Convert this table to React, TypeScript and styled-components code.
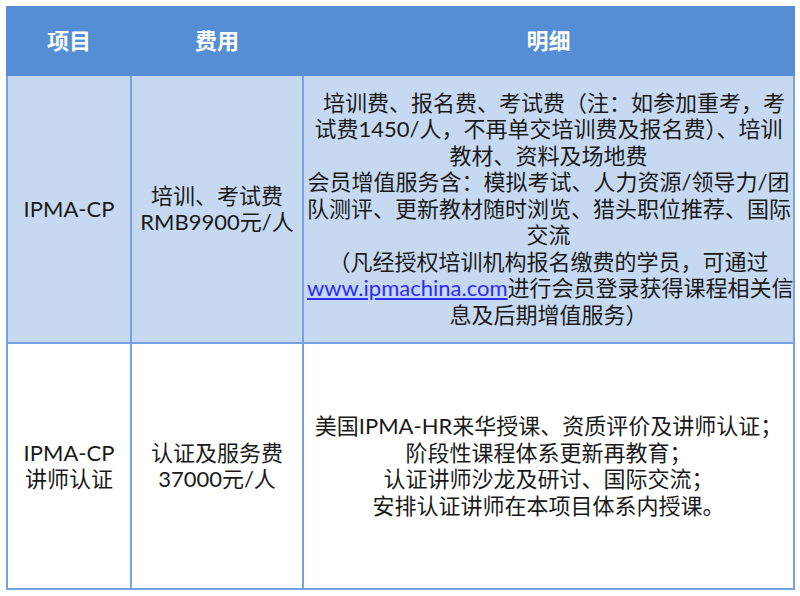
import styled, { createGlobalStyle } from "styled-components";

const GlobalStyle = createGlobalStyle`
  html, body {
    margin: 0;
    padding: 0;
    background: #ffffff;
  }
  body {
    font-family: Lato, "Noto Sans CJK SC", sans-serif;
    color: #1a1a1a;
  }
`;

const Page = styled.div`
  padding: 6px;
`;

const Table = styled.table`
  border-collapse: collapse;
  table-layout: fixed;
  width: 787px;
  font-size: 22px;
  line-height: 26.5px;
`;

const HeadRow = styled.tr`
  height: 68px;
  background: #558ed5;
`;

const HeadCell = styled.th`
  border: 2px solid #558ed5;
  color: #ffffff;
  font-weight: 700;
  text-align: center;
  vertical-align: middle;
  padding: 0;
`;

const BodyRow = styled.tr<{ $shade?: boolean; $h: number }>`
  height: ${({ $h }) => $h}px;
  background: ${({ $shade }) => ($shade ? "#c6d9f1" : "#ffffff")};
`;

const Cell = styled.td`
  border: 2px solid #75a2e2;
  text-align: center;
  vertical-align: middle;
  padding: 0 3px;
  white-space: nowrap;
  overflow: hidden;
`;

const Link = styled.a`
  color: #2b2bff;
  text-decoration: underline;
`;

export default function App() {
  return (
    <>
      <GlobalStyle />
      <Page>
        <Table>
          <colgroup>
            <col style={{ width: 124 }} />
            <col style={{ width: 172 }} />
            <col style={{ width: 491 }} />
          </colgroup>
          <thead>
            <HeadRow>
              <HeadCell>项目</HeadCell>
              <HeadCell>费用</HeadCell>
              <HeadCell>明细</HeadCell>
            </HeadRow>
          </thead>
          <tbody>
            <BodyRow $shade $h={268}>
              <Cell>IPMA-CP</Cell>
              <Cell>
                培训、考试费
                <br />
                RMB9900元/人
              </Cell>
              <Cell>
                &nbsp;&nbsp;培训费、报名费、考试费（注：如参加重考，考
                <br />
                试费1450/人，不再单交培训费及报名费）、培训
                <br />
                教材、资料及场地费
                <br />
                会员增值服务含：模拟考试、人力资源/领导力/团
                <br />
                队测评、更新教材随时浏览、猎头职位推荐、国际
                <br />
                交流
                <br />
                （凡经授权培训机构报名缴费的学员，可通过
                <br />
                <Link href="#">www.ipmachina.com</Link>进行会员登录获得课程相关信
                <br />
                息及后期增值服务）
              </Cell>
            </BodyRow>
            <BodyRow $h={246}>
              <Cell>
                IPMA-CP
                <br />
                讲师认证
              </Cell>
              <Cell>
                认证及服务费
                <br />
                37000元/人
              </Cell>
              <Cell>
                美国IPMA-HR来华授课、资质评价及讲师认证；
                <br />
                阶段性课程体系更新再教育；
                <br />
                认证讲师沙龙及研讨、国际交流；
                <br />
                安排认证讲师在本项目体系内授课。
              </Cell>
            </BodyRow>
          </tbody>
        </Table>
      </Page>
    </>
  );
}
